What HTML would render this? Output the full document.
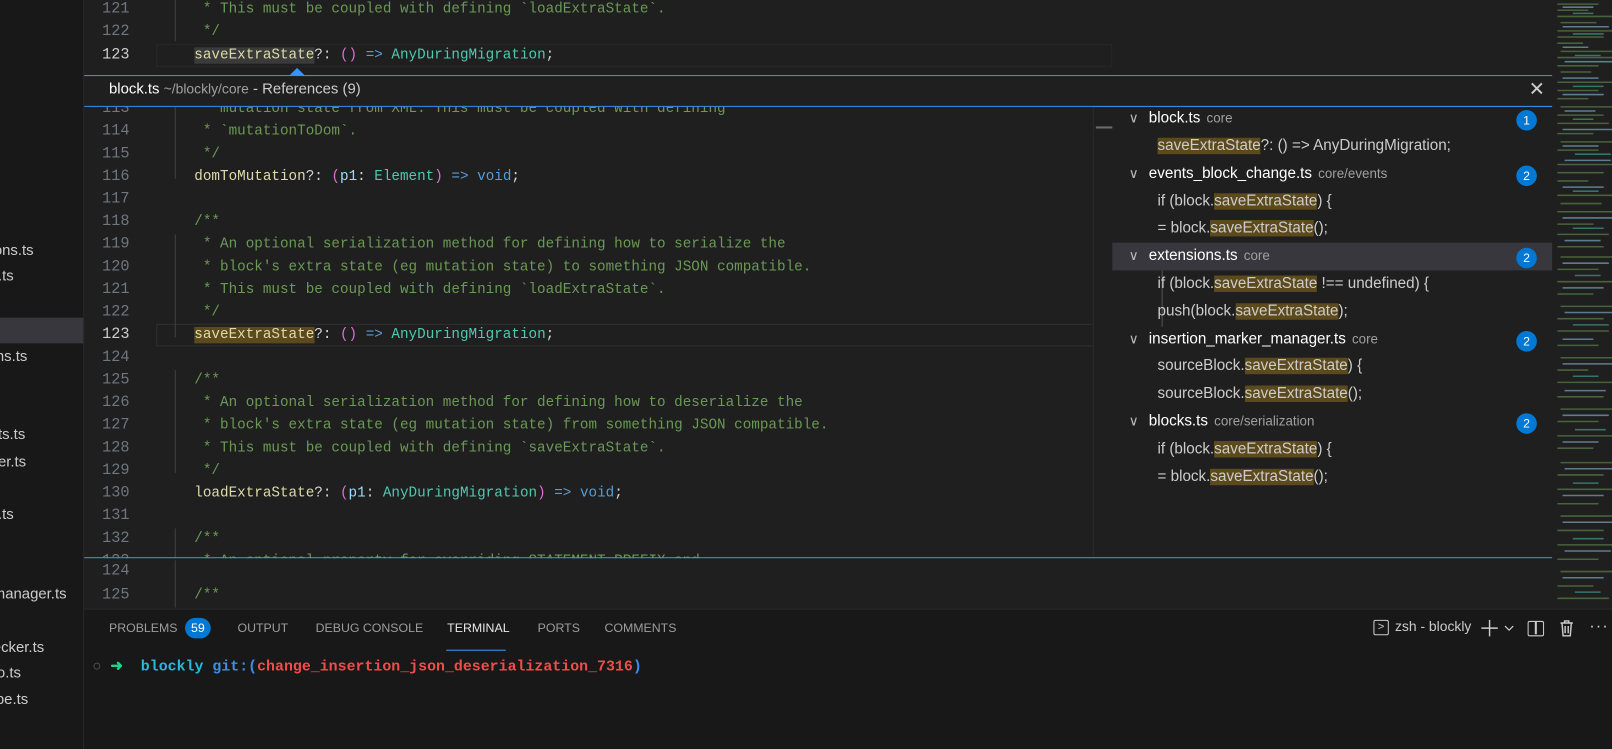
<!DOCTYPE html>
<html><head><meta charset="utf-8"><style>
*{margin:0;padding:0;box-sizing:border-box}
html,body{width:1612px;height:729px;overflow:hidden;background:#1f1f1f}
body{font-family:"Liberation Sans",sans-serif;color:#ccc}
#w{position:absolute;left:0;top:0;width:1568px;height:710px;transform:scale(1.028);transform-origin:0 0}
.abs{position:absolute}
.mono{font-family:"Liberation Mono",monospace;font-size:13.9px;white-space:pre}
.ln{position:absolute;width:44px;text-align:right;color:#6e7681;font-family:"Liberation Mono",monospace;font-size:14.8px;line-height:22px}
.cl{position:absolute;line-height:22px;color:#d4d4d4}
.c{color:#6a9955}.p{color:#dcdcaa}.t{color:#4ec9b0}.k{color:#569cd6}.m{color:#da70d6}.v{color:#9cdcfe}
.hl{background:#5c4a1c}
.side{left:0;top:0;width:82px;height:729px;background:#181818;border-right:1px solid #2b2b2b;overflow:hidden}
.side div{position:absolute;font-size:14.5px;color:#ccc;white-space:nowrap}
.li{position:absolute;left:1126px;font-size:14.8px;color:#ccc;white-space:nowrap}
.fh{position:absolute;left:1098px;font-size:14.8px;color:#fff;white-space:nowrap}
.fh .d{color:#a0a0a0;font-size:13px;margin-left:6px}
.fh .ch{color:#bbb;margin-right:10px;font-size:13px}
.badge{position:absolute;left:1475px;width:20px;height:20px;border-radius:10px;background:#0078d4;color:#fff;font-size:12px;text-align:center;line-height:20px}
.tab{position:absolute;top:604px;font-size:12px;color:#9d9d9d}
</style></head><body><div id="w">
<div class="abs side">
<div style="top:236px;left:-6px">ons.ts</div>
<div style="top:261px;left:-2px">.ts</div>
<div style="top:309px;left:0;width:82px;height:25px;background:#37373d"></div>
<div style="top:339px;left:-4px">ns.ts</div>
<div style="top:415px;left:-2px">ts.ts</div>
<div style="top:442px;left:-2px">er.ts</div>
<div style="top:493px;left:-2px">.ts</div>
<div style="top:570px;left:-7px">manager.ts</div>
<div style="top:622px;left:-7px">ecker.ts</div>
<div style="top:647px;left:-3px">o.ts</div>
<div style="top:673px;left:-4px">pe.ts</div>
</div>

<div class="ln" style="left:82px;top:-2px">121</div>
<div class="ln" style="left:82px;top:20px">122</div>
<div class="ln" style="left:82px;top:43px;color:#ccc">123</div>
<div class="abs" style="left:170px;top:0;width:1px;height:40px;background:#404040"></div>
<div class="cl mono" style="left:189px;top:-2px"><span class="c"> * This must be coupled with defining `loadExtraState`.</span></div>
<div class="cl mono" style="left:189px;top:20px"><span class="c"> */</span></div>
<div class="abs" style="left:152px;top:43px;width:930px;height:22px;border:1px solid #282828"></div>
<div class="cl mono" style="left:189px;top:43px"><span class="p" style="background:#3a3a3a">saveExtraState</span>?: <span class="m">()</span> <span class="k">=&gt;</span> <span class="t">AnyDuringMigration</span>;</div>
<div class="abs" style="left:282px;top:66px;width:0;height:0;border-left:7px solid transparent;border-right:7px solid transparent;border-bottom:7px solid #3794ff"></div>

<div class="abs" style="left:82px;top:73px;width:1428px;height:31px;background:#1f1f1f;border-top:1px solid #3794ff;border-bottom:1px solid #3794ff"></div>
<div class="abs" style="left:106px;top:79px;font-size:14.5px;color:#fff;white-space:nowrap">block.ts <span style="color:#a0a0a0;font-size:13.5px">~/blockly/core</span> <span style="color:#ccc">- References (9)</span></div>
<div class="abs" style="left:1487px;top:76px;font-size:19px;color:#ccc">✕</div>

<div class="abs" style="left:82px;top:104px;width:981px;height:439px;overflow:hidden;background:#1f1f1f">
<div class="ln" style="left:0;top:-9px">113</div>
<div class="cl mono" style="left:107px;top:-9px"><span class="c">   mutation state from XML. This must be coupled with defining</span></div>
<div id="pl"></div>
</div>
<div class="abs" style="left:1063px;top:104px;width:1px;height:439px;background:#2b2b2b"></div>
<div class="abs" style="left:1066px;top:123px;width:16px;height:2px;background:#6b6b6b"></div>

<div class="abs" style="left:1082px;top:236px;width:428px;height:27px;background:#37373d"></div>
<div class="abs" style="left:1130px;top:263px;width:1px;height:55px;background:#555"></div>
<div class="fh" style="top:107px"><span class="ch">∨</span>block.ts<span class="d">core</span></div>
<div class="badge" style="top:107px">1</div>
<div class="li" style="top:134px"><span class="hl">saveExtraState</span>?: () =&gt; AnyDuringMigration;</div>
<div class="fh" style="top:161px"><span class="ch">∨</span>events_block_change.ts<span class="d">core/events</span></div>
<div class="badge" style="top:161px">2</div>
<div class="li" style="top:188px">if (block.<span class="hl">saveExtraState</span>) {</div>
<div class="li" style="top:214px">= block.<span class="hl">saveExtraState</span>();</div>
<div class="fh" style="top:241px"><span class="ch">∨</span>extensions.ts<span class="d">core</span></div>
<div class="badge" style="top:241px">2</div>
<div class="li" style="top:268px">if (block.<span class="hl">saveExtraState</span> !== undefined) {</div>
<div class="li" style="top:295px">push(block.<span class="hl">saveExtraState</span>);</div>
<div class="fh" style="top:322px"><span class="ch">∨</span>insertion_marker_manager.ts<span class="d">core</span></div>
<div class="badge" style="top:322px">2</div>
<div class="li" style="top:348px">sourceBlock.<span class="hl">saveExtraState</span>) {</div>
<div class="li" style="top:375px">sourceBlock.<span class="hl">saveExtraState</span>();</div>
<div class="fh" style="top:402px"><span class="ch">∨</span>blocks.ts<span class="d">core/serialization</span></div>
<div class="badge" style="top:402px">2</div>
<div class="li" style="top:429px">if (block.<span class="hl">saveExtraState</span>) {</div>
<div class="li" style="top:456px">= block.<span class="hl">saveExtraState</span>();</div>

<div class="abs" style="left:82px;top:542px;width:1428px;height:1px;background:#3794ff"></div>
<div class="ln" style="left:82px;top:545px">124</div>
<div class="ln" style="left:82px;top:568px">125</div>
<div class="abs" style="left:170px;top:545px;width:1px;height:46px;background:#404040"></div>
<div class="cl mono" style="left:189px;top:568px"><span class="c">/**</span></div>

<div class="abs" style="left:1510px;top:0;width:102px;height:592px;background:#1f1f1f;overflow:hidden">
<svg width="102" height="592">
<g stroke-width="1.5">
<path d="M5 4h40M5 10h30M5 16h55M8 22h35M5 30h60M5 36h45M5 42h25M8 50h50M5 56h70M5 64h40M8 70h30M5 80h55M5 88h40M5 96h30M8 104h60M5 112h45M5 120h50M5 130h35M8 138h55M5 146h40M5 160h60M5 168h45M5 176h30M5 190h55M8 198h40M5 206h65M5 218h35M5 228h50M5 240h45M8 250h60M5 262h40M5 274h55M5 286h35M8 298h65M5 310h45M5 322h50M5 336h40M8 348h55M5 360h30M5 372h60M5 386h45M8 398h50M5 410h40M5 424h65M5 436h35M8 450h55M5 462h45M5 476h60M5 490h40M8 502h50M5 516h45M5 530h55M5 544h40M8 556h60M5 570h35M5 582h50" stroke="#6a9955" opacity=".55"/>
<path d="M10 7h30M10 26h45M10 46h25M12 60h50M10 76h35M10 92h40M12 108h30M10 126h55M10 142h35M12 156h45M10 182h40M10 212h50M12 234h35M10 256h45M10 280h40M12 304h55M10 330h30M10 354h50M12 380h40M10 404h45M10 430h35M12 456h55M10 482h40M10 508h50M12 536h45M10 562h40" stroke="#9cdcfe" opacity=".5"/>
<path d="M20 13h20M20 33h30M22 54h25M20 84h30M20 116h20M22 150h35M20 186h25M20 222h30M22 268h25M20 316h35M20 366h25M22 418h30M20 470h25M20 524h30M22 576h25" stroke="#4ec9b0" opacity=".5"/>
</g></svg>
</div>

<div class="abs" style="left:82px;top:592px;width:1530px;height:137px;background:#181818;border-top:1px solid #2b2b2b"></div>
<div class="tab" style="left:106px">PROBLEMS</div>
<div class="abs" style="left:180px;top:601px;width:25px;height:20px;border-radius:10px;background:#0078d4;color:#fff;font-size:12px;text-align:center;line-height:20px">59</div>
<div class="tab" style="left:231px">OUTPUT</div>
<div class="tab" style="left:307px">DEBUG CONSOLE</div>
<div class="tab" style="left:435px;color:#e7e7e7">TERMINAL</div>
<div class="abs" style="left:434px;top:632px;width:58px;height:1px;background:#3794ff"></div>
<div class="tab" style="left:523px">PORTS</div>
<div class="tab" style="left:588px">COMMENTS</div>
<div class="abs" style="left:1336px;top:603px;width:15px;height:15px;border:1.5px solid #ccc;border-radius:2px;font-size:11px;line-height:12px;text-align:center;color:#ccc">&gt;</div>
<div class="abs" style="left:1357px;top:602px;font-size:13.5px;color:#ccc;white-space:nowrap">zsh - blockly</div>
<svg class="abs" style="left:1440px;top:602px" width="18" height="18"><path d="M9 1v16M1 9h16" stroke="#ccc" stroke-width="1.4"/></svg>
<svg class="abs" style="left:1463px;top:607px" width="10" height="8"><path d="M1 2l4 4 4-4" stroke="#ccc" stroke-width="1.2" fill="none"/></svg>
<div class="abs" style="left:1486px;top:604px;width:16px;height:15px;border:1.5px solid #ccc;border-radius:2px"><div style="position:absolute;left:6px;top:0;width:1.5px;height:12px;background:#ccc"></div></div>
<svg class="abs" style="left:1516px;top:603px" width="16" height="17"><path d="M2 3h12M6 3V1h4v2M3.5 3.5l1 12h7l1-12M6.5 6v7M9.5 6v7" stroke="#ccc" stroke-width="1.4" fill="none"/></svg>
<div class="abs" style="left:1546px;top:601px;font-size:16px;color:#ccc;letter-spacing:1px">···</div>

<div class="abs mono" style="left:90px;top:640px;font-weight:bold;line-height:18px;font-size:14.5px"><span style="color:#666;font-weight:normal">○</span> <span style="color:#23d18b">➜</span>  <span style="color:#29b8db">blockly</span> <span style="color:#3b8eea">git:(</span><span style="color:#f14c4c">change_insertion_json_deserialization_7316</span><span style="color:#3b8eea">)</span></div>
</div>
<script>
var L=[
[114,' * `mutationToDom`.','c'],
[115,' */','c'],
[116,'<span class="p">domToMutation</span>?: <span class="m">(</span><span class="v">p1</span>: <span class="t">Element</span><span class="m">)</span> <span class="k">=&gt;</span> <span class="k">void</span>;'],
[117,''],
[118,'/**','c'],
[119,' * An optional serialization method for defining how to serialize the','c'],
[120," * block's extra state (eg mutation state) to something JSON compatible.",'c'],
[121,' * This must be coupled with defining `loadExtraState`.','c'],
[122,' */','c'],
[123,'<span class="p hl">saveExtraState</span>?: <span class="m">()</span> <span class="k">=&gt;</span> <span class="t">AnyDuringMigration</span>;'],
[124,''],
[125,'/**','c'],
[126,' * An optional serialization method for defining how to deserialize the','c'],
[127," * block's extra state (eg mutation state) from something JSON compatible.",'c'],
[128,' * This must be coupled with defining `saveExtraState`.','c'],
[129,' */','c'],
[130,'<span class="p">loadExtraState</span>?: <span class="m">(</span><span class="v">p1</span>: <span class="t">AnyDuringMigration</span><span class="m">)</span> <span class="k">=&gt;</span> <span class="k">void</span>;'],
[131,''],
[132,'/**','c'],
[133,' * An optional property for overriding STATEMENT_PREFIX and','c']];
var h='';
L.forEach(function(l,i){var y=13+i*22;
h+='<div class="ln" style="left:0;top:'+y+'px;'+(l[0]==123?'color:#ccc':'')+'">'+l[0]+'</div>';
if(l[0]==123)h+='<div style="position:absolute;left:70px;top:'+y+'px;width:912px;height:22px;border:1px solid #303030"></div>';
h+='<div class="cl mono" style="left:107px;top:'+y+'px">'+(l[2]?'<span class="c">'+l[1]+'</span>':l[1])+'</div>';});
h+='<div style="position:absolute;left:88px;top:0;width:1px;height:70px;background:#404040"></div><div style="position:absolute;left:88px;top:124px;width:1px;height:100px;background:#404040"></div><div style="position:absolute;left:88px;top:256px;width:1px;height:100px;background:#404040"></div><div style="position:absolute;left:88px;top:410px;width:1px;height:30px;background:#404040"></div>';
document.getElementById('pl').outerHTML=h;
</script>
</body></html>
